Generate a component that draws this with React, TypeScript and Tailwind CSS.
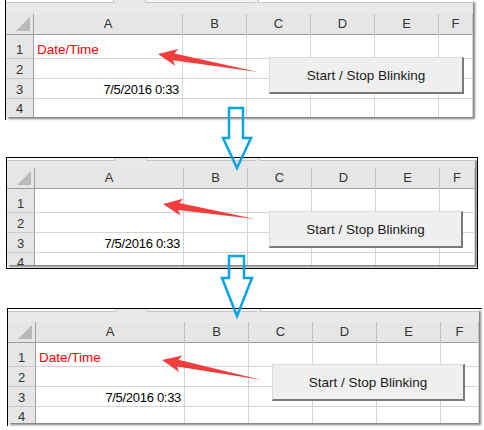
import React from "react";

const letters = ["A", "B", "C", "D", "E", "F"];

// arrow pointing from the tail back to the tip, tapered shaft
const redArrow = (tx: number, ty: number, ex: number, ey: number) => {
  const len = Math.hypot(ex - tx, ey - ty);
  const dx = (ex - tx) / len;
  const dy = (ey - ty) / len;
  const p = (a: number, b: number) =>
    `${(tx + dx * a - dy * b).toFixed(1)},${(ty + dy * a + dx * b).toFixed(1)}`;
  return [p(0, 0), p(19, 8.5), p(16, 3.5), `${ex},${ey}`, p(16, -3.5), p(19, -8.5)].join(" ");
};

const Cell = ({ children, className = "" }: { children?: React.ReactNode; className?: string }) => (
  <div className={`flex items-end border-r border-b border-[#d4d4d4] leading-4 ${className}`}>{children}</div>
);

const Row = ({
  n,
  height,
  a,
  label = "items-end",
}: {
  n: number;
  height: string;
  a?: React.ReactNode;
  label?: string;
}) => (
  <div className={`grid grid-cols-[28px_149px_64px_64px_64px_64px_1fr] shrink-0 ${height}`}>
    <div
      className={`flex justify-center bg-[#e6e6e6] border-r border-r-[#9e9e9e] border-b border-b-[#c9c9c9] text-[13px] leading-4 text-[#333] ${label}`}
    >
      {n}
    </div>
    {a ?? <Cell />}
    <Cell />
    <Cell />
    <Cell />
    <Cell />
    <Cell />
  </div>
);

type PanelProps = {
  outer: string;
  sheet: string;
  strip: string;
  button: string;
  showLabel?: boolean;
};

const Panel = ({ outer, sheet, strip, button, showLabel }: PanelProps) => (
  <div className={`relative shrink-0 ${outer}`}>
    <div className={`flex flex-col overflow-hidden bg-white shadow-[2px_2px_2px_rgba(0,0,0,0.5)] ${sheet}`}>
      {/* formula bar remains */}
      <div className={`relative shrink-0 bg-[#e9e9e9] ${strip}`}>
        <div className="absolute left-0 top-0 h-[3px] w-[108px] border-b border-r border-[#c6c6c6] bg-white" />
        <div className="absolute left-[139px] top-0 h-[3px] w-[110px] border-b border-l border-[#c6c6c6] bg-[#f3f3f3]" />
        <div className="absolute left-[252px] right-0 top-0 h-[3px] border-b border-l border-[#c6c6c6] bg-white" />
      </div>
      <div className="grid h-[20px] shrink-0 grid-cols-[28px_149px_64px_64px_64px_64px_1fr] bg-[#e6e6e6] text-[13px] text-[#333]">
        <div className="relative border-r border-b border-[#9e9e9e]">
          <svg className="absolute right-[2px] bottom-[2px]" width="15" height="15" viewBox="0 0 15 15">
            <polygon points="14,0 14,14 0,14" fill="#b9b9b9" />
          </svg>
        </div>
        {letters.map((l) => (
          <div key={l} className="flex items-center justify-center border-r border-r-[#c2c2c2] border-b border-b-[#9e9e9e]">
            {l}
          </div>
        ))}
      </div>
      <Row
        n={1}
        height="h-[25px]"
        a={
          <Cell className="pl-[3px] text-[13.5px] text-[#ff0000]">{showLabel ? "Date/Time" : ""}</Cell>
        }
      />
      <Row n={2} height="h-[20px]" />
      <Row
        n={3}
        height="h-[20px]"
        a={<Cell className="justify-end pr-[3px] text-[13px] tracking-[-0.3px] text-black">7/5/2016 0:33</Cell>}
      />
      <Row n={4} height="h-[20px]" label="items-center" />
    </div>
    <button
      className={`absolute flex h-[37px] items-center justify-center border-t border-l border-[#dadada] border-r-2 border-b-2 border-r-[#7a7a7a] border-b-[#7a7a7a] bg-[#efefef] pt-[2px] text-[13.5px] text-[#1a1a1a] ${button}`}
    >
      Start / Stop Blinking
    </button>
  </div>
);

export default function App() {
  return (
    <div className="relative h-[430px] w-[484px] overflow-hidden bg-white font-['Liberation_Sans',Arial,sans-serif]">
      <div className="flex flex-col">
        <Panel
          outer="ml-[5px] w-[471px] h-[120px] border-l border-black"
          sheet="w-[467px] h-[117px]"
          strip="h-[14px]"
          button="left-[263px] top-[57px] w-[195px]"
          showLabel
        />
        <Panel
          outer="mt-[37px] ml-[6px] w-[472px] h-[112px] border border-black"
          sheet="w-[468px] h-[107px]"
          strip="h-[10px]"
          button="left-[262px] top-[53px] w-[194px]"
        />
        <Panel
          outer="mt-[39px] ml-[7px] w-[475px] h-[118px] border-l border-t border-black"
          sheet="w-[471px] h-[114px]"
          strip="h-[13px]"
          button="left-[264px] top-[55px] w-[193px]"
          showLabel
        />
      </div>

      {/* annotations drawn over the screenshots */}
      <svg className="pointer-events-none absolute left-0 top-0" width="484" height="430" viewBox="0 0 484 430">
        <polygon points={redArrow(158, 54, 258, 72)} fill="#f33c3c" />
        <polygon points={redArrow(163, 204, 255, 219)} fill="#f33c3c" />
        <polygon points={redArrow(162, 360, 262, 380)} fill="#f33c3c" />
        <polygon
          points="229,108 243,108 243,138 251,138 237,168 223,138 229,138"
          fill="none"
          stroke="#0aa3e6"
          strokeWidth="2.5"
          strokeLinejoin="miter"
        />
        <polygon
          points="229,256 244,256 244,278 252,278 237,316 222,278 229,278"
          fill="none"
          stroke="#0aa3e6"
          strokeWidth="2.5"
          strokeLinejoin="miter"
        />
      </svg>
    </div>
  );
}
